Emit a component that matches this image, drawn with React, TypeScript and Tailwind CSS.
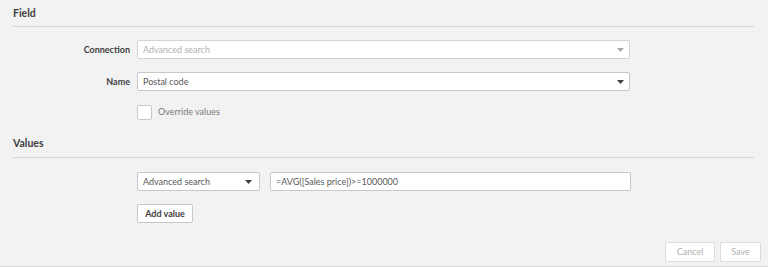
function Caret({ light }: { light?: boolean }) {
  return (
    <svg width="7" height="4" viewBox="0 0 7 4" className="shrink-0">
      <path d="M0 0 H7 L3.5 4 Z" fill={light ? "#a8a8a8" : "#404040"} />
    </svg>
  );
}

export default function App() {
  return (
    <div
      className="w-[768px] h-[267px] bg-[#f2f2f2] text-[#595959] border-b border-[#d9d9d9] overflow-hidden"
      style={{ fontFamily: "Lato, 'Open Sans', sans-serif" }}
    >
      <div className="px-[13px] flex flex-col">
        {/* Field section */}
        <div className="h-[27px] flex items-center pt-[1px] border-b border-[#d6d6d6] w-[741px]">
          <h2 className="text-[10.5px] font-bold text-[#404040]">Field</h2>
        </div>

        <div className="flex items-center mt-[13px] h-[19px]">
          <label className="w-[124px] text-right pr-[7px] text-[9px] font-bold text-[#404040]">Connection</label>
          <div className="w-[493px] h-[19px] bg-white border border-[#d4d4d4] rounded-[2px] flex items-center justify-between pl-[5px] pr-[5px]">
            <span className="text-[9px] text-[#b0b0b0]">Advanced search</span>
            <Caret light />
          </div>
        </div>

        <div className="flex items-center mt-[13px] h-[19px]">
          <label className="w-[124px] text-right pr-[7px] text-[9px] font-bold text-[#404040]">Name</label>
          <div className="w-[493px] h-[19px] bg-white border border-[#c8c8c8] rounded-[2px] flex items-center justify-between pl-[5px] pr-[5px]">
            <span className="text-[9px] text-[#595959]">Postal code</span>
            <Caret />
          </div>
        </div>

        <div className="flex items-center mt-[13px] ml-[124px] h-[16px]">
          <div className="w-[15px] h-[15px] bg-white border border-[#c8c8c8] rounded-[2px]" />
          <span className="ml-[6px] text-[9px] text-[#7a7a7a]">Override values</span>
        </div>

        {/* Values section */}
        <div className="h-[27px] mt-[11px] flex items-center border-b border-[#d6d6d6] w-[741px]">
          <h2 className="text-[10.5px] font-bold text-[#404040]">Values</h2>
        </div>

        <div className="flex items-center mt-[14px] ml-[124px] h-[19px]">
          <div className="w-[123px] h-[19px] bg-white border border-[#c8c8c8] rounded-[2px] flex items-center justify-between pl-[5px] pr-[7px]">
            <span className="text-[9px] text-[#595959]">Advanced search</span>
            <Caret />
          </div>
          <div className="ml-[10px] w-[361px] h-[19px] bg-white border border-[#c8c8c8] rounded-[2px] flex items-center pl-[5px]">
            <span className="text-[9px] text-[#595959]">=AVG([Sales price])&gt;=1000000</span>
          </div>
        </div>

        <div className="flex mt-[13px] ml-[124px]">
          <button className="h-[19px] w-[56px] bg-white border border-[#c8c8c8] rounded-[2px] text-[9px] font-bold text-[#404040]">
            Add value
          </button>
        </div>

        <div className="flex justify-end gap-[5px] mt-[19px] w-[748px]">
          <button className="w-[50px] h-[20px] bg-white border border-[#dcdcdc] rounded-[2px] text-[9px] text-[#b0b0b0]">
            Cancel
          </button>
          <button className="w-[41px] h-[20px] bg-white border border-[#dcdcdc] rounded-[2px] text-[9px] text-[#b0b0b0]">
            Save
          </button>
        </div>
      </div>
    </div>
  );
}
